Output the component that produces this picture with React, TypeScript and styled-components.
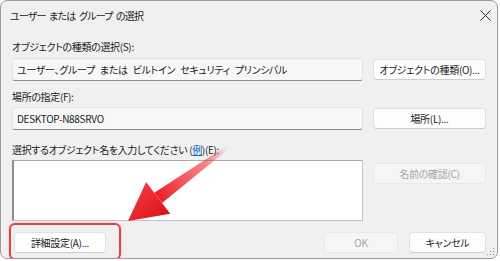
import React from 'react'
import styled, { createGlobalStyle } from 'styled-components'

const GlobalStyle = createGlobalStyle`
  html, body {
    margin: 0;
    padding: 0;
    background: #ffffff;
  }
  body {
    font-family: "Noto Sans CJK JP", "Noto Sans", sans-serif;
    font-feature-settings: "palt";
    color: #1b1b1b;
  }
`

const Window = styled.div`
  position: relative;
  box-sizing: border-box;
  width: 498px;
  height: 259px;
  border: 1px solid #9c9c9c;
  border-radius: 7px;
  background: #f0f0f0;
  display: flex;
  flex-direction: column;
  overflow: hidden;
`

const TitleBar = styled.div`
  height: 29px;
  display: flex;
  align-items: center;
  justify-content: space-between;
  padding: 0 1px 2px 9px;
`

const Title = styled.span`
  font-size: 10px;
  letter-spacing: -0.8px;
  word-spacing: 2px;
`

const CloseBtn = styled.div`
  width: 22px;
  height: 20px;
  display: flex;
  align-items: center;
  justify-content: center;
`

const Content = styled.div`
  padding: 8px 11px 0 11px;
  display: flex;
  flex-direction: column;
`

const Label = styled.div<{ $mt?: number }>`
  height: 14px;
  line-height: 14px;
  font-size: 10px;
  letter-spacing: -0.35px;
  margin-top: ${p => p.$mt ?? 0}px;
  white-space: nowrap;
`

const Row = styled.div<{ $mt?: number; $h: number }>`
  display: grid;
  grid-template-columns: 1fr 113px;
  column-gap: 10px;
  height: ${p => p.$h}px;
  margin-top: ${p => p.$mt ?? 0}px;
`

const ReadField = styled.div`
  box-sizing: border-box;
  height: 100%;
  display: flex;
  align-items: center;
  padding-left: 4px;
  background: #f7f7f7;
  border: 1px solid #e2e2e2;
  border-bottom: 1px solid #8c8c8c;
  border-radius: 3px;
  font-size: 10px;
  letter-spacing: -0.3px;
  word-spacing: 3px;
  white-space: pre;
  overflow: hidden;
`

const TextArea = styled.div`
  box-sizing: border-box;
  height: 100%;
  background: #ffffff;
  border-top: 1px solid #a9a9a9;
  border-left: 2px solid #8e8e8e;
  border-right: 1px solid #c4c4c4;
  border-bottom: 1px solid #c4c4c4;
`

const Button = styled.button<{ $w?: number; $align?: string; $mt?: number; $disabled?: boolean }>`
  box-sizing: border-box;
  width: ${p => (p.$w ? `${p.$w}px` : '100%')};
  height: 21px;
  align-self: ${p => p.$align ?? 'center'};
  margin-top: ${p => p.$mt ?? 0}px;
  padding: 0;
  font-family: inherit;
  font-feature-settings: "palt";
  font-size: 10px;
  letter-spacing: -0.3px;
  color: ${p => (p.$disabled ? '#a6a6a6' : '#1b1b1b')};
  background: ${p => (p.$disabled ? '#f5f5f5' : '#fdfdfd')};
  border: 1px solid ${p => (p.$disabled ? '#e9e9e9' : '#e0e0e0')};
  border-bottom-color: ${p => (p.$disabled ? '#e9e9e9' : '#cccccc')};
  border-radius: 4px;
  white-space: nowrap;
`

const LinkText = styled.span`
  color: #1463c8;
  text-decoration: underline;
`

const Footer = styled.div`
  display: flex;
  align-items: center;
  margin-top: 11px;
  padding-left: 2px;
`

const RightButtons = styled.div`
  margin-left: auto;
  display: flex;
  gap: 11px;
`

const HighlightWrap = styled.div`
  position: relative;
  display: flex;
`

const Highlight = styled.div`
  position: absolute;
  left: -5px;
  right: -15px;
  top: -9px;
  bottom: -7px;
  border: 2px solid #e04448;
  border-radius: 6px;
  box-shadow: 0 0 2px rgba(224, 68, 72, 0.45);
  pointer-events: none;
`

const ArrowLayer = styled.svg`
  position: absolute;
  left: -1px;
  top: -1px;
  pointer-events: none;
`

const Grip = styled.svg`
  position: absolute;
  right: 2px;
  bottom: 2px;
`

export default function App() {
  return (
    <>
      <GlobalStyle />
      <Window>
        <TitleBar>
          <Title>ユーザー または グループ の選択</Title>
          <CloseBtn>
            <svg width="11" height="11" viewBox="0 0 11 11">
              <path d="M0.5 0.5 L10.5 10.5 M10.5 0.5 L0.5 10.5" stroke="#2a2a2a" strokeWidth="1" />
            </svg>
          </CloseBtn>
        </TitleBar>

        <Content>
          <Label>オブジェクトの種類の選択(S):</Label>
          <Row $mt={4} $h={23}>
            <ReadField>ユーザー、グループ または ビルトイン セキュリティ プリンシパル</ReadField>
            <Button>オブジェクトの種類(O)...</Button>
          </Row>

          <Label $mt={9}>場所の指定(F):</Label>
          <Row $mt={3} $h={23}>
            <ReadField>DESKTOP-N88SRVO</ReadField>
            <Button>場所(L)...</Button>
          </Row>

          <Label $mt={13}>
            選択するオブジェクト名を入力してください (<LinkText>例</LinkText>)(E):
          </Label>
          <Row $mt={3} $h={61}>
            <TextArea />
            <Button $align="start" $mt={3} $disabled>名前の確認(C)</Button>
          </Row>

          <Footer>
            <HighlightWrap>
              <Button $w={92}>詳細設定(A)...</Button>
              <Highlight />
            </HighlightWrap>
            <RightButtons>
              <Button $w={74} $disabled>OK</Button>
              <Button $w={77}>キャンセル</Button>
            </RightButtons>
          </Footer>
        </Content>

        <ArrowLayer width="500" height="261" viewBox="0 0 500 261">
          <defs>
            <linearGradient id="shaft" gradientUnits="userSpaceOnUse" x1="228" y1="146" x2="156" y2="199">
              <stop offset="0" stopColor="#f04a4a" stopOpacity="0" />
              <stop offset="0.3" stopColor="#ee3a3a" stopOpacity="0.6" />
              <stop offset="1" stopColor="#e81c22" stopOpacity="1" />
            </linearGradient>
            <linearGradient id="head" gradientUnits="userSpaceOnUse" x1="146" y1="182" x2="170" y2="214">
              <stop offset="0" stopColor="#f4383c" />
              <stop offset="1" stopColor="#d8141a" />
            </linearGradient>
            <filter id="soft" x="-20%" y="-20%" width="140%" height="140%">
              <feGaussianBlur stdDeviation="0.5" />
            </filter>
          </defs>
          <g filter="url(#soft)">
            <polygon points="229,148.6 227,145.6 154.3,192.7 162.1,203.1" fill="url(#shaft)" />
            <polygon points="128,221 146.1,182 158.2,197.9 170.3,213.8" fill="url(#head)" />
          </g>
        </ArrowLayer>

        <Grip width="8" height="8" viewBox="0 0 8 8">
          <rect x="6" y="0" width="1.2" height="1.2" fill="#9a9a9a" />
          <rect x="3" y="3" width="1.2" height="1.2" fill="#9a9a9a" />
          <rect x="6" y="3" width="1.2" height="1.2" fill="#9a9a9a" />
          <rect x="0" y="6" width="1.2" height="1.2" fill="#9a9a9a" />
          <rect x="3" y="6" width="1.2" height="1.2" fill="#9a9a9a" />
          <rect x="6" y="6" width="1.2" height="1.2" fill="#9a9a9a" />
        </Grip>
      </Window>
    </>
  )
}
